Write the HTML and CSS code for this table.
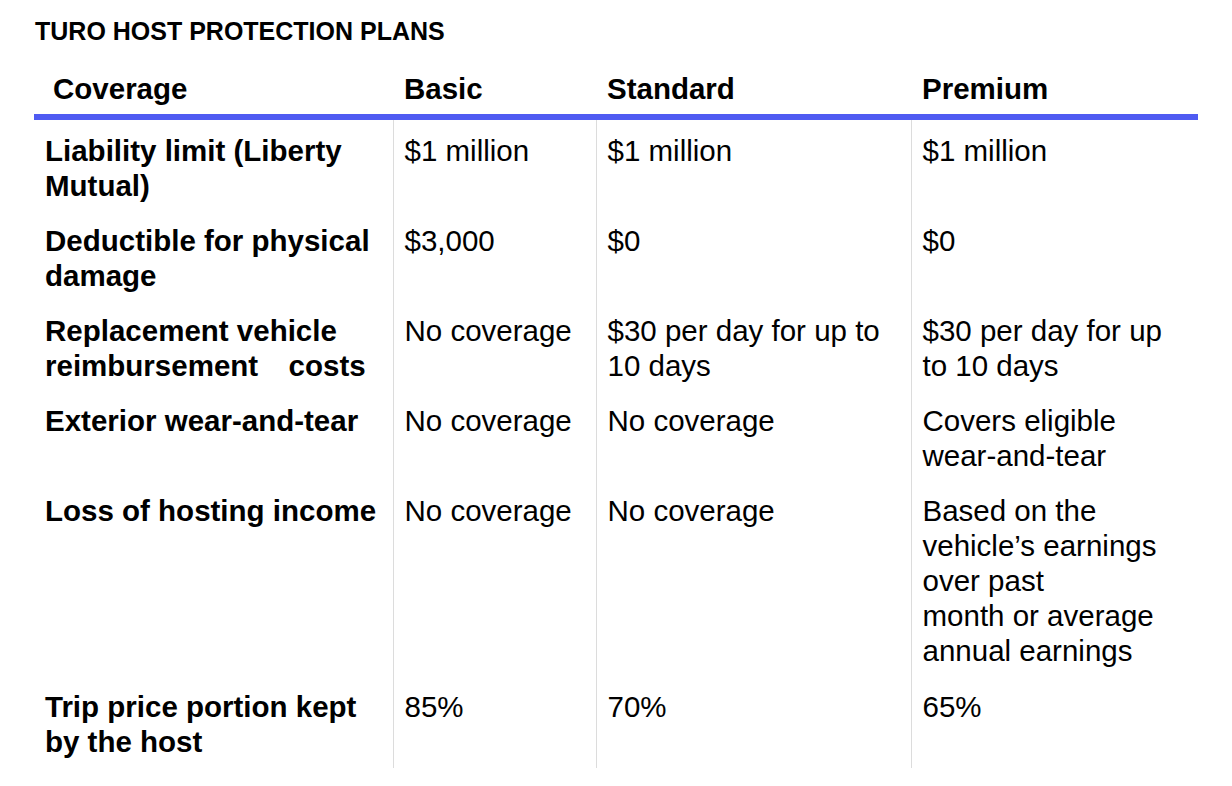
FILE: index.html
```html
<!DOCTYPE html>
<html>
<head>
<meta charset="utf-8">
<link rel="stylesheet" href="styles.css">
</head>
<body>
<div class="page">
  <h1 class="title">TURO HOST PROTECTION PLANS</h1>
  <table class="plans">
    <colgroup>
      <col class="c1"><col class="c2"><col class="c3"><col class="c4">
    </colgroup>
    <thead>
      <tr>
        <th class="first">Coverage</th>
        <th>Basic</th>
        <th>Standard</th>
        <th>Premium</th>
      </tr>
    </thead>
    <tbody>
      <tr>
        <th>Liability limit (Liberty Mutual)</th>
        <td>$1 million</td>
        <td>$1 million</td>
        <td>$1 million</td>
      </tr>
      <tr>
        <th>Deductible for physical damage</th>
        <td>$3,000</td>
        <td>$0</td>
        <td>$0</td>
      </tr>
      <tr>
        <th>Replacement vehicle reimbursement&nbsp;&nbsp;&thinsp; costs</th>
        <td>No coverage</td>
        <td>$30 per day for up to 10 days</td>
        <td>$30 per day for up to 10 days</td>
      </tr>
      <tr>
        <th>Exterior wear-and-tear</th>
        <td>No coverage</td>
        <td>No coverage</td>
        <td>Covers eligible wear-and-tear</td>
      </tr>
      <tr>
        <th>Loss of hosting income</th>
        <td>No coverage</td>
        <td>No coverage</td>
        <td>Based on the vehicle’s earnings over past<br>month or average annual earnings</td>
      </tr>
      <tr class="last">
        <th>Trip price portion kept by the host</th>
        <td>85%</td>
        <td>70%</td>
        <td>65%</td>
      </tr>
    </tbody>
  </table>
</div>
</body>
</html>
```
FILE: styles.css
```css
html, body {
  margin: 0;
  padding: 0;
  background: #ffffff;
}

body {
  font-family: "Liberation Sans", Arial, Helvetica, sans-serif;
  color: #000000;
}

.page {
  padding: 16px 0 0 34px;
}

.title {
  margin: 0 0 0 1px;
  font-size: 25px;
  line-height: 30px;
  font-weight: 700;
}

.plans {
  margin-top: 25px;
  width: 1164px;
  border-collapse: collapse;
  table-layout: fixed;
}

.c1 { width: 359px; }
.c2 { width: 203px; }
.c3 { width: 315px; }
.c4 { width: 287px; }

.plans th,
.plans td {
  font-size: 29.5px;
  line-height: 35px;
  text-align: left;
  vertical-align: top;
  padding: 13px 11px 7px 11px;
}

.plans th {
  font-weight: 700;
}

.plans td {
  font-weight: 400;
  border-left: 1px solid #dcdcdc;
}

.plans tr.last th,
.plans tr.last td {
  padding-top: 14px;
  padding-bottom: 9px;
}

.plans thead th {
  padding-top: 0;
  padding-bottom: 8px;
  border-bottom: 6px solid #4f5bf2;
}

.plans thead th.first {
  padding-left: 19px;
}
```
